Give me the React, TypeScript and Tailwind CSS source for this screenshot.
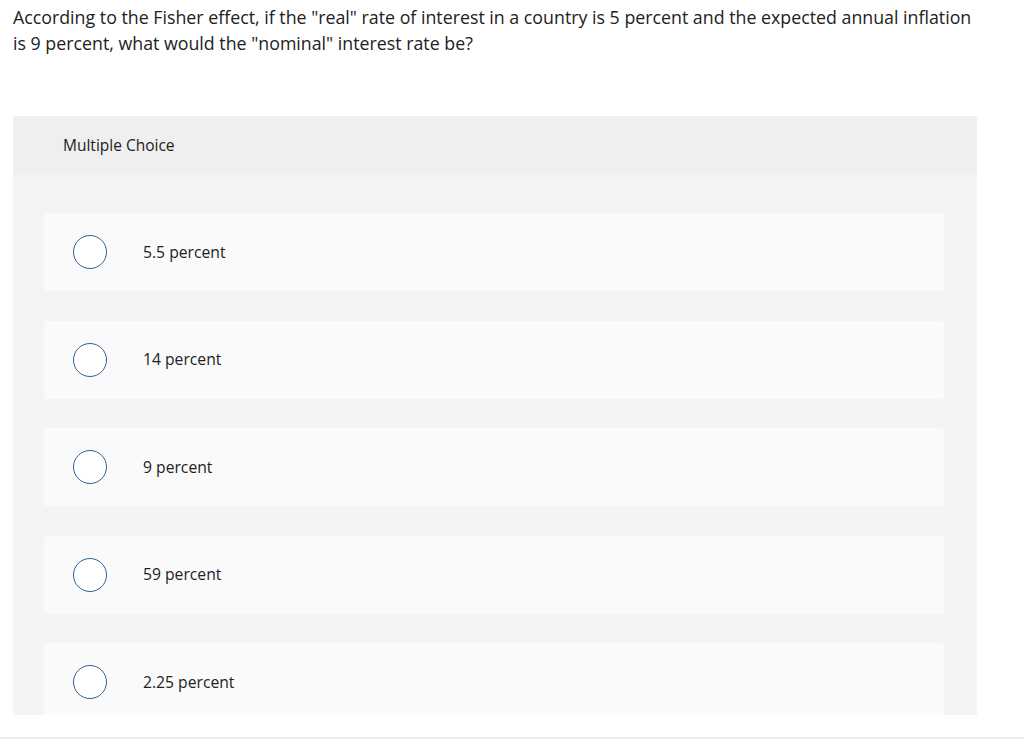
const choices = ["5.5 percent", "14 percent", "9 percent", "59 percent", "2.25 percent"];

function Radio() {
  return (
    <span className="block w-[34px] h-[34px] shrink-0 rounded-full border-[1.5px] border-[#2f5f99] bg-white" />
  );
}

export default function App() {
  return (
    <div className="w-[1024px] h-[745px] bg-white text-[#222] font-['Open_Sans','Noto_Sans',sans-serif] overflow-hidden">
      <div className="h-[739px] border-b-2 border-[#eeeeee]">
        <p className="pl-[13px] pt-[4px] text-[17.8px] leading-[26px] whitespace-nowrap">
          According to the Fisher effect, if the "real" rate of interest in a country is 5 percent and the expected annual inflation
          <br />
          is 9 percent, what would the "nominal" interest rate be?
        </p>

        <div className="mt-[60px] ml-[13px] w-[964px] h-[599px] rounded-t-[3px] overflow-hidden bg-[#f4f4f4]">
          <div className="h-[59px] bg-[#efefef] flex items-center pl-[50px] text-[15.5px] text-[#222]">
            Multiple Choice
          </div>
          <div className="pt-[38px] pl-[31px] pr-[33px] flex flex-col gap-[29.5px]">
            {choices.map((c) => (
              <div
                key={c}
                className="h-[78px] shrink-0 bg-[#fafafa] rounded-[3px] flex items-center pl-[29px]"
              >
                <Radio />
                <span className="ml-[36px] pt-[1px] text-[15.7px] text-[#222]">{c}</span>
              </div>
            ))}
          </div>
        </div>
      </div>
    </div>
  );
}
